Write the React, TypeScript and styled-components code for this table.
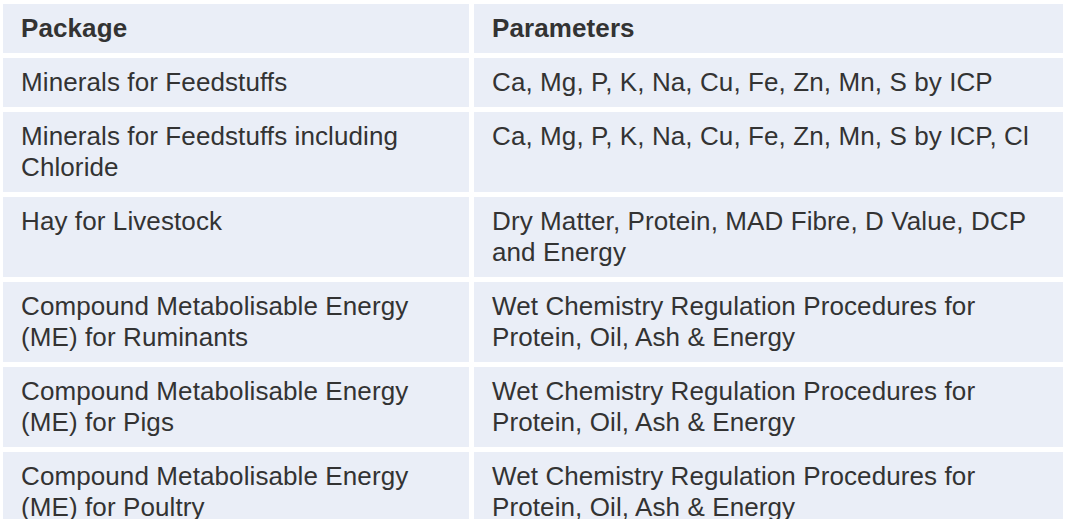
import React from "react";
import styled, { createGlobalStyle } from "styled-components";

const GlobalStyle = createGlobalStyle`
  html, body {
    margin: 0;
    padding: 0;
    background: #ffffff;
  }
  body {
    font-family: "Liberation Sans", Arial, sans-serif;
    color: #333333;
  }
`;

const Table = styled.div`
  display: grid;
  grid-template-columns: 466px 589px;
  gap: 5px;
  padding: 4px 3px 0 3px;
`;

const Cell = styled.div<{ $head?: boolean }>`
  background: #eaeef7;
  padding: 9px 18px 9px 18px;
  font-size: 26px;
  line-height: 31px;
  letter-spacing: 0.1px;
  font-weight: ${(p) => (p.$head ? 700 : 400)};
  color: #333333;
`;

const rows: [string, string][] = [
  ["Minerals for Feedstuffs", "Ca, Mg, P, K, Na, Cu, Fe, Zn, Mn, S by ICP"],
  [
    "Minerals for Feedstuffs including Chloride",
    "Ca, Mg, P, K, Na, Cu, Fe, Zn, Mn, S by ICP, Cl",
  ],
  ["Hay for Livestock", "Dry Matter, Protein, MAD Fibre, D Value, DCP and Energy"],
  [
    "Compound Metabolisable Energy (ME) for Ruminants",
    "Wet Chemistry Regulation Procedures for Protein, Oil, Ash & Energy",
  ],
  [
    "Compound Metabolisable Energy (ME) for Pigs",
    "Wet Chemistry Regulation Procedures for Protein, Oil, Ash & Energy",
  ],
  [
    "Compound Metabolisable Energy (ME) for Poultry",
    "Wet Chemistry Regulation Procedures for Protein, Oil, Ash & Energy",
  ],
];

export default function App() {
  return (
    <>
      <GlobalStyle />
      <Table>
        <Cell $head>Package</Cell>
        <Cell $head>Parameters</Cell>
        {rows.map(([a, b], i) => (
          <React.Fragment key={i}>
            <Cell>{a}</Cell>
            <Cell>{b}</Cell>
          </React.Fragment>
        ))}
      </Table>
    </>
  );
}
